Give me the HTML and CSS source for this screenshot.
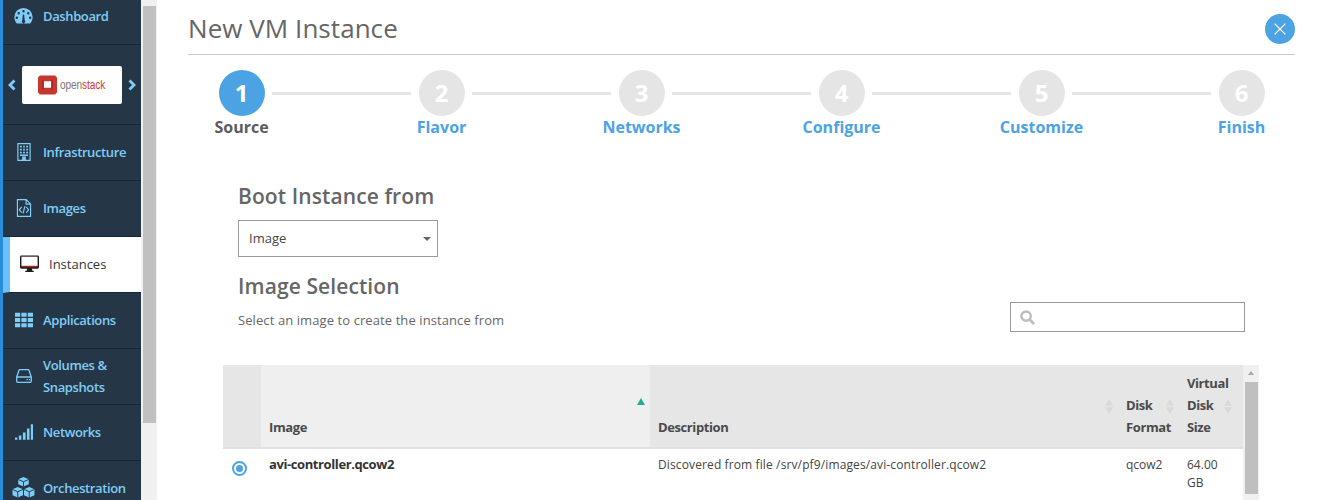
FILE: index.html
```html
<!DOCTYPE html>
<html lang="en">
<head>
<meta charset="utf-8">
<title>New VM Instance</title>
<link rel="stylesheet" href="styles.css">
</head>
<body>
<div class="page">
  <nav class="sidebar">
    <a class="nav-item">
      <svg class="nav-icon nav-gauge" viewBox="0 0 20 18"><path fill="currentColor" fill-rule="evenodd" d="M10 .5a9.6 9.6 0 0 0-9.6 9.6c0 2.8 1 5 2.6 6.9h14c1.600-1.900 2.600-4.100 2.600-6.900A9.600 9.600 0 0 0 10 .5zM10 2.600a1.300 1.300 0 1 1 0 2.600 1.300 1.300 0 0 1 0-2.600zM5 4.700A1.300 1.300 0 1 1 5 7.300 1.300 1.300 0 0 1 5 4.700zM15 4.700a1.300 1.300 0 1 1 0 2.600 1.300 1.300 0 0 1 0-2.600zM3 9.600a1.300 1.300 0 1 1 0 2.600 1.300 1.300 0 0 1 0-2.600zM17 9.600a1.300 1.300 0 1 1 0 2.600 1.300 1.300 0 0 1 0-2.600zM9.300 7.500h1.400l.6 6a1.800 1.800 0 1 1-2.600 0z"/></svg>
      <span>Dashboard</span>
    </a>
    <div class="nav-logo">
      <svg class="chev" viewBox="0 0 8 12"><path d="M6.500 1.500 2 6l4.500 4.500" fill="none" stroke="currentColor" stroke-width="2.800"/></svg>
      <div class="logo-box">
        <svg class="logo-mark" viewBox="0 0 20 20"><path fill="#c8372d" fill-rule="evenodd" d="M2 0h16l2 2v16l-2 2H2l-2-2V2zM6 6v7h8V6z"/><path fill="#9c2620" d="M4.500 5h1.500v10H4.500zM14 5h1.500v10H14z"/></svg>
        <span class="logo-text">open<b>stack</b></span>
      </div>
      <svg class="chev" viewBox="0 0 8 12"><path d="M1.500 1.500 6 6l-4.500 4.500" fill="none" stroke="currentColor" stroke-width="2.800"/></svg>
    </div>
    <a class="nav-item">
      <svg class="nav-icon" viewBox="0 0 20 20"><path fill="none" stroke="currentColor" stroke-width="1.300" d="M3.200.7h13.600v18.600H3.200z"/><path fill="currentColor" d="M5.500 3h2v2h-2zM9 3h2v2H9zM12.500 3h2v2h-2zM5.500 6.300h2v2h-2zM9 6.300h2v2H9zM12.500 6.300h2v2h-2zM5.500 9.600h2v2h-2zM9 9.600h2v2H9zM12.500 9.600h2v2h-2zM5.500 12.900h9v1.500h-9zM8 15h4v4H8z"/></svg>
      <span>Infrastructure</span>
    </a>
    <a class="nav-item">
      <svg class="nav-icon" viewBox="0 0 20 20"><path fill="none" stroke="currentColor" stroke-width="1.300" d="M2.700.7h9.800l4.800 4.800v13.800H2.700zM12.300.7v5h5"/><path fill="none" stroke="currentColor" stroke-width="1.300" d="M7.500 8.800 4.800 12l2.700 3.200M12.500 8.800l2.700 3.200-2.700 3.200M11 8l-2 8"/></svg>
      <span>Images</span>
    </a>
    <a class="nav-item nav-active">
      <svg class="nav-icon" viewBox="0 0 20 18"><path fill="#1d1d1d" d="M1.500 0h17A1.500 1.500 0 0 1 20 1.500v11a1.500 1.500 0 0 1-1.500 1.500h-6l.5 2h1.500v1.500h-9V16H7l.5-2h-6A1.500 1.500 0 0 1 0 12.500v-11A1.500 1.500 0 0 1 1.500 0z"/><path fill="#fff" d="M1.500 1.300h17V11h-17z"/><path fill="#a8271e" d="M1.500 11h17v1.500h-17z"/></svg>
      <span>Instances</span>
    </a>
    <a class="nav-item">
      <svg class="nav-icon" viewBox="0 0 20 16"><path fill="currentColor" d="M0 0h5.800v4.400H0zM7.100 0h5.800v4.400H7.100zM14.200 0H20v4.400h-5.800zM0 5.800h5.800v4.400H0zM7.100 5.800h5.800v4.400H7.100zM14.200 5.800H20v4.400h-5.800zM0 11.600h5.800V16H0zM7.100 11.600h5.800V16H7.100zM14.200 11.600H20V16h-5.800z"/></svg>
      <span>Applications</span>
    </a>
    <a class="nav-item">
      <svg class="nav-icon nav-icon-small" viewBox="0 0 16 14"><path fill="none" stroke="currentColor" stroke-width="1.300" d="M.7 8 3 1.200A.800.800 0 0 1 3.800.7h8.400a.800.800 0 0 1 .8.500L15.300 8v4a1.300 1.300 0 0 1-1.300 1.300H2A1.300 1.300 0 0 1 .7 12zM.7 8h14.600"/><path fill="currentColor" d="M10.500 10h1.300v1.300h-1.300zM12.800 10h1.300v1.300h-1.300z"/></svg>
      <span>Volumes &amp;<br>Snapshots</span>
    </a>
    <a class="nav-item">
      <svg class="nav-icon" viewBox="0 0 20 17"><path fill="currentColor" d="M0 14.500h2.600V17H0zM4.300 12.500h2.800V17H4.300zM8.800 9h3V17h-3zM13.300 4.500h2.800V17h-2.800zM17.600 0H20v17h-2.400z"/></svg>
      <span>Networks</span>
    </a>
    <a class="nav-item nav-item-wide">
      <svg class="nav-icon-wide" viewBox="0 0 24 22"><path fill="currentColor" d="M12 0l5.500 2.400v5.200L12 10 6.500 7.600V2.400zM6 10.500l5.500 2.400v6.200L6 21.500.5 19.100v-6.200zM18 10.500l5.500 2.400v6.200L18 21.500l-5.500-2.400v-6.200z"/><path fill="none" stroke="#253746" stroke-width="1" d="M6.500 2.600 12 5l5.500-2.400M12 5v5M.5 13 6 15.400 11.500 13M6 15.400v6M12.500 13 18 15.400 23.500 13M18 15.400v6"/></svg>
      <span>Orchestration</span>
    </a>
  </nav>
  <div class="side-scroll"><div class="side-thumb"></div></div>
  <main class="main">
    <header class="title-bar">
      <h1>New VM Instance</h1>
      <button class="close" aria-label="Close"><svg viewBox="0 0 12 12"><path d="M.6.6l10.800 10.800M11.400.6.600 11.400" stroke="#fff" stroke-width="1.300"/></svg></button>
    </header>
    <ol class="stepper">
      <li class="step step-current"><span class="dot">1</span><span class="step-label">Source</span></li>
      <li class="step-line"></li>
      <li class="step"><span class="dot">2</span><span class="step-label">Flavor</span></li>
      <li class="step-line"></li>
      <li class="step"><span class="dot">3</span><span class="step-label">Networks</span></li>
      <li class="step-line"></li>
      <li class="step"><span class="dot">4</span><span class="step-label">Configure</span></li>
      <li class="step-line"></li>
      <li class="step"><span class="dot">5</span><span class="step-label">Customize</span></li>
      <li class="step-line"></li>
      <li class="step"><span class="dot">6</span><span class="step-label">Finish</span></li>
    </ol>
    <section class="form">
      <h2 class="boot-title">Boot Instance from</h2>
      <div class="select"><span>Image</span><i class="caret"></i></div>
      <h2 class="image-title">Image Selection</h2>
      <div class="sub-row">
        <p>Select an image to create the instance from</p>
        <div class="search">
          <svg viewBox="0 0 16 16"><circle cx="6.500" cy="6.500" r="5" fill="none" stroke="#bdbdbd" stroke-width="2.600"/><path d="M10.500 10.500 15 15" stroke="#bdbdbd" stroke-width="3"/></svg>
        </div>
      </div>
    </section>
    <div class="table-wrap">
      <table class="grid">
        <colgroup><col class="c-radio"><col class="c-image"><col class="c-desc"><col class="c-format"><col class="c-size"></colgroup>
        <thead>
          <tr>
            <th></th>
            <th class="sorted">Image<i class="sort-up"></i></th>
            <th>Description<i class="sort-both"></i></th>
            <th>Disk Format<i class="sort-both"></i></th>
            <th class="th-size">Virtual Disk Size<i class="sort-both"></i></th>
          </tr>
        </thead>
        <tbody>
          <tr>
            <td class="radio-cell"><span class="radio"></span></td>
            <td class="name">avi-controller.qcow2</td>
            <td class="desc">Discovered from file /srv/pf9/images/avi-controller.qcow2</td>
            <td>qcow2</td>
            <td>64.00 GB</td>
          </tr>
        </tbody>
      </table>
      <div class="table-scroll"><i class="scroll-up"></i><div class="table-thumb"></div></div>
    </div>
  </main>
</div>
</body>
</html>
```

FILE: styles.css
```css
* { box-sizing: border-box; }
html, body { margin: 0; height: 500px; overflow: hidden; background: #fff; }
body { font-family: "Open Sans", sans-serif; color: #666; }
.page { display: flex; height: 500px; overflow: hidden; }

.sidebar { width: 141px; flex: none; margin-top: -12px; background: #253746; border-left: 3px solid #2a8ddb; color: #80cdf7; height: 512px; overflow: hidden; }
.nav-item { display: flex; align-items: center; gap: 10px; height: 56px; padding: 0 0 2px 12px; border-bottom: 1px solid #14283a; font-size: 13px; font-weight: 600; line-height: 22px; letter-spacing: -.38px; }
.nav-icon { width: 18px; height: 18px; flex: none; }
.nav-item:first-child { height: 57px; padding-bottom: 0; padding-left: 11px; }
.nav-gauge { width: 19px; }
.nav-icon-small { width: 16px; height: 14px; margin: 0 1px; }
.nav-item-wide { padding-left: 9px; gap: 8px; }
.nav-icon-wide { width: 23px; height: 21px; flex: none; }
.nav-active { background: #fff; color: #333; font-weight: 400; letter-spacing: 0; border-left: 7px solid #6cc0fb; padding-left: 10px; border-bottom-color: #14283a; }
.nav-active .nav-icon { width: 19px; }
.nav-logo { display: flex; align-items: center; justify-content: space-between; height: 80px; padding: 0 5px; border-bottom: 1px solid #14283a; }
.chev { width: 8px; height: 12px; flex: none; }
.logo-box { width: 100px; height: 38px; background: #fff; border-radius: 2px; display: flex; align-items: center; padding-left: 16px; gap: 3px; }
.logo-mark { width: 19px; height: 20px; flex: none; }
.logo-text { font-family: "Liberation Sans", sans-serif; font-size: 12px; color: #777; letter-spacing: -.1px; transform: scaleX(.84); transform-origin: left center; }
.logo-text b { font-weight: 400; color: #c8372d; }

.side-scroll { width: 16px; flex: none; padding: 6px 1px 0 2px; background: #f0f0f0; }
.side-thumb { height: 417px; background: #c0c0c0; }

.main { flex: 1; min-width: 0; padding: 0 24px 0 31px; }
.title-bar { display: flex; align-items: center; justify-content: space-between; height: 55px; border-bottom: 1px solid #c8c8c8; }
h1 { margin: 0 0 -3px; font-size: 26px; font-weight: 400; line-height: 55px; letter-spacing: .05px; color: #666; }
.close { width: 30px; height: 30px; padding: 9px; margin: 4px 0 0; border: 0; border-radius: 50%; background: #4ba3e3; display: flex; }
.close svg { width: 12px; height: 12px; }

.stepper { display: flex; list-style: none; margin: 15px 0 0; padding: 0 0 0 31px; }
.step { width: 46px; flex: none; display: flex; flex-direction: column; align-items: center; }
.dot { width: 46px; height: 46px; padding-right: 1px; border-radius: 50%; background: #e5e5e5; color: #fff; font-size: 24px; font-weight: 700; line-height: 46px; text-align: center; }
.step-label { margin-right: 1px; font-size: 16px; font-weight: 700; line-height: 22px; color: #4ba3e3; white-space: nowrap; }
.step-current .dot { background: #4ba3e3; }
.step-current .step-label { color: #5c5c5c; }
.step-line { width: 139px; height: 3px; flex: none; margin: 22px 8px 0 7px; background: #e5e5e5; }

.form { padding: 0 50px; }
h2 { margin: 0; font-size: 21px; font-weight: 600; line-height: 28px; letter-spacing: .1px; color: #666; }
.boot-title { margin-top: 44px; }
.select { display: flex; align-items: center; justify-content: space-between; width: 200px; height: 37px; margin-top: 10px; padding: 0 6px 2px 10px; border: 1px solid #999; font-size: 13px; color: #444; }
.caret { width: 0; height: 0; margin-top: 2px; border: 4px solid transparent; border-top: 4px solid #666; border-bottom: 0; }
.image-title { margin-top: 15px; }
.sub-row { display: flex; align-items: flex-start; justify-content: space-between; margin-top: 2px; }
.sub-row p { margin: 7px 0 0; font-size: 13px; line-height: 22px; letter-spacing: .09px; color: #666; }
.search { width: 235px; height: 30px; padding: 7px 9px; border: 1px solid #999; }
.search svg { width: 15px; height: 15px; display: block; }

.table-wrap { display: flex; align-items: stretch; margin: 33px 0 0 35px; width: 1036px; height: 135px; overflow: hidden; }
.grid { width: 1020px; flex: none; table-layout: fixed; border-collapse: collapse; align-self: flex-start; font-size: 12px; color: #444; }
.c-radio { width: 38px; } .c-image { width: 389px; } .c-desc { width: 468px; } .c-format { width: 61px; } .c-size { width: 64px; }
th { position: relative; height: 83px; padding: 7px 8px 9px; background: #e6e6e6; border-bottom: 2px solid #e0e0e0; vertical-align: bottom; text-align: left; font-size: 13px; font-weight: 700; line-height: 22px; letter-spacing: -.4px; color: #4a4a4a; }
th.sorted { background: #efefef; }
td { padding: 7px 8px; vertical-align: top; line-height: 18px; color: #444; }
td.name { padding-top: 6px; font-size: 13px; font-weight: 700; letter-spacing: -.4px; color: #333; }
td.desc { letter-spacing: .12px; }
.radio-cell { padding: 12px 0 0 9px; }
.radio { display: block; width: 15px; height: 15px; border: 2px solid #4ba3e3; border-radius: 50%; padding: 2px; background: #4ba3e3 content-box; }
.sort-up { position: absolute; top: 33px; right: 5px; border: 4px solid transparent; border-top: 0; border-bottom: 7px solid #1fae8f; }
.sort-both { position: absolute; top: 34px; right: 5px; width: 8px; height: 15px; background: #dadada; clip-path: polygon(50% 0, 100% 45%, 0 45%, 0 55%, 100% 55%, 50% 100%, 0 55%, 0 45%); }
.th-size .sort-both { right: 11px; }
.table-scroll { width: 16px; flex: none; background: #f0f0f0; padding: 6px 2px 0; display: flex; flex-direction: column; align-items: center; }
.scroll-up { width: 0; height: 0; border: 3.500px solid transparent; border-top: 0; border-bottom: 4px solid #a8a8a8; }
.table-thumb { width: 13px; height: 112px; margin-top: 7px; background: #bfbfbf; flex: none; }
```
